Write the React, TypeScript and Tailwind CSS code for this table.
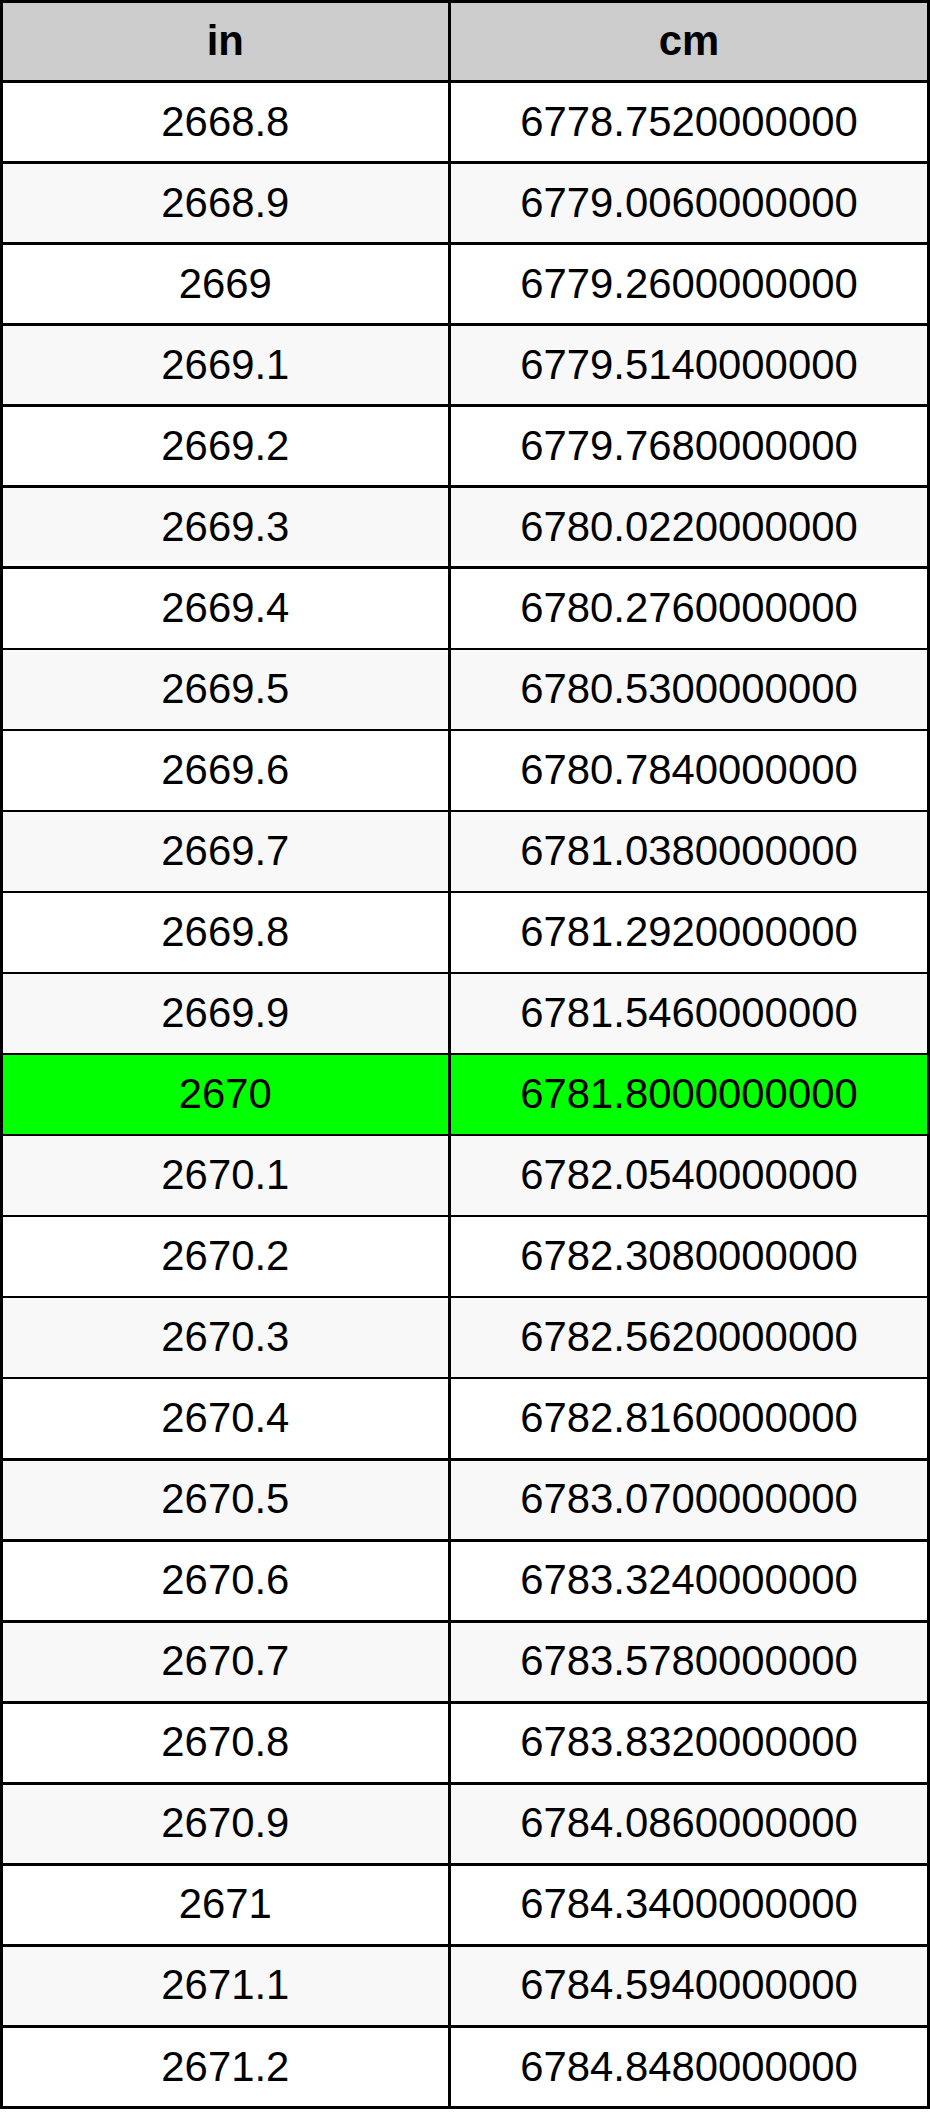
const rows = Array.from({ length: 25 }, (_, i) => {
  const tenths = 26688 + i;
  const inches = tenths % 10 === 0 ? String(tenths / 10) : `${Math.floor(tenths / 10)}.${tenths % 10}`;
  const milli = tenths * 254; // cm * 1000
  const cm = `${Math.floor(milli / 1000)}.${String(milli % 1000).padStart(3, "0")}0000000`;
  return { inches, cm, highlight: tenths === 26700 };
});

export default function App() {
  return (
    <div className="w-[930px] bg-white" style={{ fontFamily: '"Liberation Sans", Arial, sans-serif' }}>
      <div className="grid grid-cols-[445.3px_1fr] gap-[2.7px] bg-black p-[2.7px] text-[41.85px] text-black">
        <div className="flex h-[77.6px] items-center justify-center bg-[#cccccc] font-bold">in</div>
        <div className="flex h-[77.6px] items-center justify-center bg-[#cccccc] font-bold">cm</div>
        {rows.map((row, i) => {
          const bg = row.highlight ? "bg-[#00ff00]" : i % 2 === 1 ? "bg-[#f8f8f8]" : "bg-white";
          return [
            <div key={`in-${i}`} className={`flex h-[78.35px] items-center justify-center ${bg}`}>
              {row.inches}
            </div>,
            <div key={`cm-${i}`} className={`flex h-[78.35px] items-center justify-center ${bg}`}>
              {row.cm}
            </div>,
          ];
        })}
      </div>
    </div>
  );
}
